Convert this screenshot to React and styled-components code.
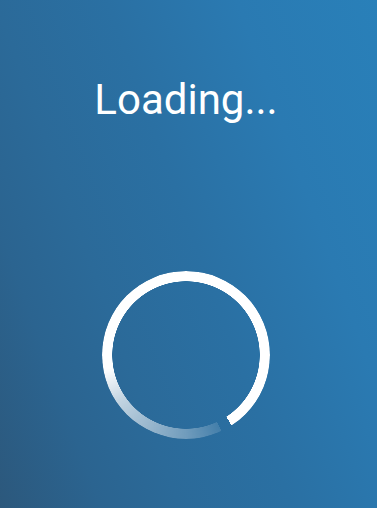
import React from "react";
import styled, { createGlobalStyle } from "styled-components";

const Global = createGlobalStyle`
  html, body { margin: 0; padding: 0; height: 100%; }
  body { font-family: Roboto, "Noto Sans", sans-serif; }
  #root { height: 100%; }
`;

const Screen = styled.div`
  width: 377px;
  height: 508px;
  box-sizing: border-box;
  background: linear-gradient(
    70deg,
    #2c587c 0%,
    #2b6490 18%,
    #2b6a99 32%,
    #2a70a3 52%,
    #2a7ab2 75%,
    #2980b9 100%
  );
  display: flex;
  flex-direction: column;
  align-items: center;
  padding: 75px 5px 0 0;
  gap: 147px;
  overflow: hidden;
`;

const Title = styled.h1`
  margin: 0;
  font-family: Roboto, sans-serif;
  font-weight: 400;
  font-size: 42px;
  line-height: normal;
  color: #ffffff;
  letter-spacing: 0;
`;

const Spinner = styled.div`
  width: 168px;
  height: 168px;
  border-radius: 50%;
  background: conic-gradient(
    from 155deg,
    rgba(255, 255, 255, 0.12) 0deg,
    rgba(255, 255, 255, 0.33) 25deg,
    rgba(255, 255, 255, 0.59) 63deg,
    rgba(255, 255, 255, 0.72) 81deg,
    #ffffff 105deg,
    #ffffff 352deg,
    rgba(255, 255, 255, 0) 352deg
  );
  -webkit-mask: radial-gradient(circle, transparent 73.5px, #000 74px);
  mask: radial-gradient(circle, transparent 73.5px, #000 74px);
`;

export default function App() {
  return (
    <>
      <Global />
      <Screen>
        <Title>Loading...</Title>
        <Spinner />
      </Screen>
    </>
  );
}
